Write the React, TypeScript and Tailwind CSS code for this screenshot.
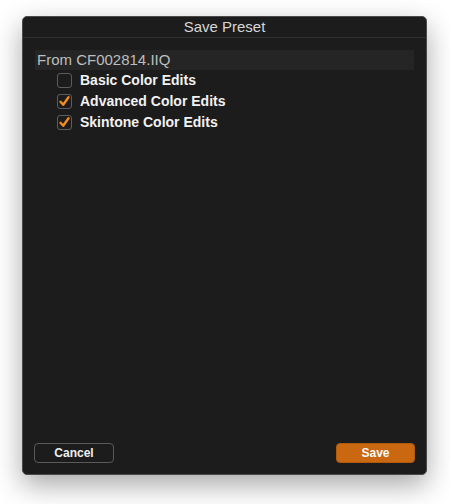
import React from 'react';

const items = [
  { label: 'Basic Color Edits', checked: false },
  { label: 'Advanced Color Edits', checked: true },
  { label: 'Skintone Color Edits', checked: true },
];

function Checkbox({ checked }: { checked: boolean }) {
  return (
    <div className="w-[15px] h-[15px] rounded-[3px] border border-[#5c5c5c] bg-[#1c1c1c] flex items-center justify-center">
      {checked && (
        <svg width="13" height="13" viewBox="0 0 13 13" fill="none">
          <path
            d="M2.5 6.8 L5.2 9.8 L10.5 2.2"
            stroke="#f28a1c"
            strokeWidth="2.4"
            strokeLinecap="round"
            strokeLinejoin="round"
          />
        </svg>
      )}
    </div>
  );
}

export default function App() {
  return (
    <div
      className="w-[450px] h-[504px] bg-white pt-[16px] pl-[22px]"
      style={{ fontFamily: '"Liberation Sans", Arial, sans-serif' }}
    >
      <div className="w-[405px] h-[459px] rounded-[5px] bg-[#1c1c1c] border border-[#4a4a4a] shadow-[0_10px_28px_rgba(0,0,0,0.35)] flex flex-col">
        {/* Title bar */}
        <div className="h-[21px] border-b border-[#2f2f2f] flex items-center justify-center text-[15px] text-[#d6d6d6]">
          Save Preset
        </div>

        {/* Content */}
        <div className="flex-1 px-[12px] pt-[12px]">
          <div className="h-[20px] bg-[#252525] flex items-center pl-[2px] text-[15px] text-[#bdbdbd]">
            From CF002814.IIQ
          </div>
          <div className="pl-[22px]">
            {items.map((it) => (
              <div key={it.label} className="h-[21px] flex items-center gap-[8px]">
                <Checkbox checked={it.checked} />
                <span className="text-[14px] font-bold text-[#f2f2f2]">{it.label}</span>
              </div>
            ))}
          </div>
        </div>

        {/* Buttons */}
        <div className="flex justify-between px-[11px] pb-[11px]">
          <button className="w-[80px] h-[20px] rounded-[4px] border border-[#5a5a5a] bg-[#1c1c1c] text-[12px] font-bold text-[#eeeeee] flex items-center justify-center">
            Cancel
          </button>
          <button className="w-[79px] h-[20px] rounded-[4px] bg-[#c96811] border border-[#b05a0e] text-[12px] font-bold text-[#fafafa] flex items-center justify-center">
            Save
          </button>
        </div>
      </div>
    </div>
  );
}
